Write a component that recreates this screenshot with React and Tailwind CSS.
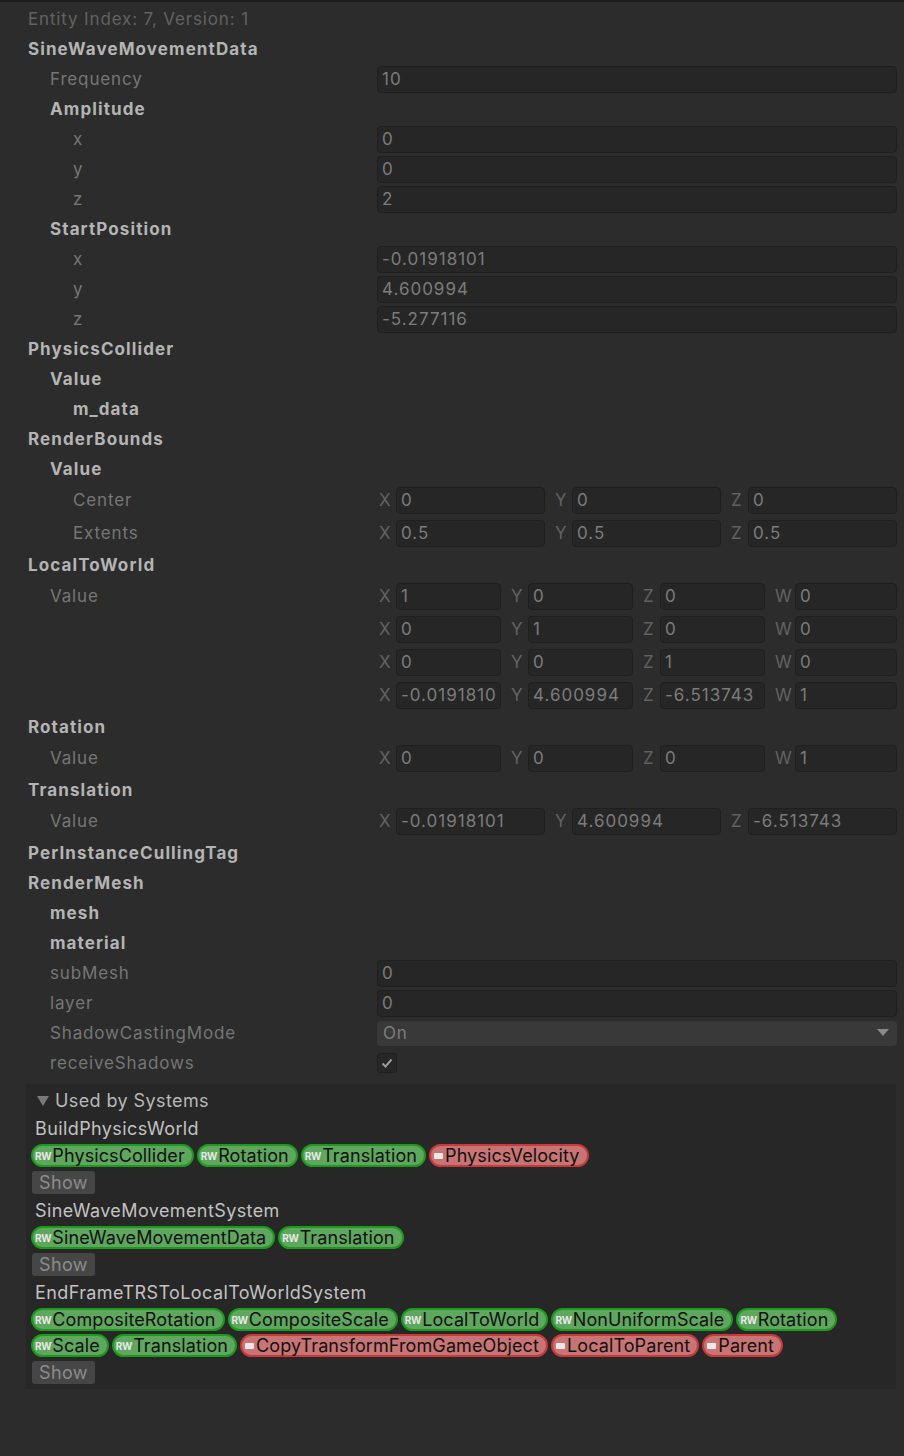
import React from "react";

const font = { fontFamily: "Inter, 'Noto Sans', sans-serif" };

const indent = ["pl-[28px]", "pl-[50px]", "pl-[73px]"];

function Field({ value }) {
  return (
    <div className="h-[27px] flex-1 min-w-0 flex items-center rounded-[4px] bg-[#262626] border border-[#1f1f1f] pl-[4px] text-[#7c7c7c] tracking-[1px] overflow-hidden whitespace-nowrap">
      {value}
    </div>
  );
}

function Row({ label, level = 0, bold = false, tall = false, children }) {
  return (
    <div className={`flex items-center ${tall ? "h-[33px]" : "h-[30px]"}`}>
      <div
        className={`w-[377px] shrink-0 whitespace-nowrap ${indent[level]} ${
          bold ? "font-bold tracking-[1.1px] text-[#b4b4b4]" : "text-[#767676]"
        }`}
      >
        {label}
      </div>
      <div className="flex-1 pr-[7px] flex items-center">{children}</div>
    </div>
  );
}

function Vec({ items }) {
  const cols = items.length === 4 ? "grid-cols-4" : "grid-cols-3";
  return (
    <div className={`grid ${cols} gap-x-[8px] w-full`}>
      {items.map(([axis, v]) => (
        <div key={axis} className="flex items-center min-w-0">
          <span className={`${axis === "W" ? "w-[22px]" : "w-[19px]"} shrink-0 pl-[2px] text-[#626262]`}>{axis}</span>
          <Field value={v} />
        </div>
      ))}
    </div>
  );
}

const RW = () => (
  <span className="text-[10px] leading-none font-bold text-[#e8e8e8] tracking-[-0.3px] mr-[1px] ml-[1px]">RW</span>
);
const Minus = () => <span className="w-[9px] h-[6px] bg-[#e9e9e9] rounded-[1px] mr-[2px] ml-[2px]" />;

function Badge({ name, rw = true }) {
  return (
    <span
      className={`inline-flex items-center h-[23px] rounded-full border-2 pl-[1px] pr-[7px] text-[#111] tracking-[0.1px] ${
        rw ? "bg-[#5fa65f] border-[#1c9a1c]" : "bg-[#c87474] border-[#c63a3a]"
      }`}
    >
      {rw ? <RW /> : <Minus />}
      {name}
    </span>
  );
}

function SystemEntry({ name, badges }) {
  return (
    <div>
      <div className="h-[22px] flex items-center pl-[9px] text-[#c2c2c2]">{name}</div>
      <div className="flex flex-wrap gap-x-[3px] gap-y-[3px] pl-[5px] mt-[4px]">
        {badges.map(([n, rw]) => (
          <Badge key={n} name={n} rw={rw} />
        ))}
      </div>
      <div className="pl-[6px] mt-[4px]">
        <span className="inline-flex items-center h-[23px] px-[7px] rounded-[3px] bg-[#464646] text-[#8c8c8c]">Show</span>
      </div>
    </div>
  );
}

export default function App() {
  return (
    <div
      className="w-[904px] h-[1456px] bg-[#2c2c2c] border-t-2 border-[#1c1c1c] text-[17px] leading-none tracking-[0.85px] overflow-hidden"
      style={font}
    >
      <div className="pt-[2px]">
        <Row label={<span className="text-[#626262]">Entity Index: 7, Version: 1</span>} />
        <Row label="SineWaveMovementData" bold />
        <Row label="Frequency" level={1}>
          <Field value="10" />
        </Row>
        <Row label="Amplitude" level={1} bold />
        <Row label="x" level={2}>
          <Field value="0" />
        </Row>
        <Row label="y" level={2}>
          <Field value="0" />
        </Row>
        <Row label="z" level={2}>
          <Field value="2" />
        </Row>
        <Row label="StartPosition" level={1} bold />
        <Row label="x" level={2}>
          <Field value="-0.01918101" />
        </Row>
        <Row label="y" level={2}>
          <Field value="4.600994" />
        </Row>
        <Row label="z" level={2}>
          <Field value="-5.277116" />
        </Row>
        <Row label="PhysicsCollider" bold />
        <Row label="Value" level={1} bold />
        <Row label="m_data" level={2} bold />
        <Row label="RenderBounds" bold />
        <Row label="Value" level={1} bold />
        <Row label="Center" level={2} tall>
          <Vec items={[["X", "0"], ["Y", "0"], ["Z", "0"]]} />
        </Row>
        <Row label="Extents" level={2} tall>
          <Vec items={[["X", "0.5"], ["Y", "0.5"], ["Z", "0.5"]]} />
        </Row>
        <Row label="LocalToWorld" bold />
        <Row label="Value" level={1} tall>
          <Vec items={[["X", "1"], ["Y", "0"], ["Z", "0"], ["W", "0"]]} />
        </Row>
        <Row label="" tall>
          <Vec items={[["X", "0"], ["Y", "1"], ["Z", "0"], ["W", "0"]]} />
        </Row>
        <Row label="" tall>
          <Vec items={[["X", "0"], ["Y", "0"], ["Z", "1"], ["W", "0"]]} />
        </Row>
        <Row label="" tall>
          <Vec items={[["X", "-0.0191810"], ["Y", "4.600994"], ["Z", "-6.513743"], ["W", "1"]]} />
        </Row>
        <Row label="Rotation" bold />
        <Row label="Value" level={1} tall>
          <Vec items={[["X", "0"], ["Y", "0"], ["Z", "0"], ["W", "1"]]} />
        </Row>
        <Row label="Translation" bold />
        <Row label="Value" level={1} tall>
          <Vec items={[["X", "-0.01918101"], ["Y", "4.600994"], ["Z", "-6.513743"]]} />
        </Row>
        <Row label="PerInstanceCullingTag" bold />
        <Row label="RenderMesh" bold />
        <Row label="mesh" level={1} bold />
        <Row label="material" level={1} bold />
        <Row label="subMesh" level={1}>
          <Field value="0" />
        </Row>
        <Row label="layer" level={1}>
          <Field value="0" />
        </Row>
        <Row label="ShadowCastingMode" level={1}>
          <div className="h-[25px] flex-1 flex items-center justify-between rounded-[4px] bg-[#393939] pl-[6px] pr-[8px] text-[#7c7c7c]">
            <span>On</span>
            <svg width="12" height="8" viewBox="0 0 12 8">
              <path d="M0 0 H12 L6 7 Z" fill="#8a8a8a" />
            </svg>
          </div>
        </Row>
        <Row label="receiveShadows" level={1}>
          <div className="w-[20px] h-[20px] rounded-[3px] bg-[#262626] border border-[#1f1f1f] flex items-center justify-center">
            <svg width="12" height="10" viewBox="0 0 12 10">
              <path d="M1.5 5.5 L4.5 8.5 L10.5 1.5" stroke="#9a9a9a" strokeWidth="2" fill="none" />
            </svg>
          </div>
        </Row>
      </div>

      <div className="ml-[26px] w-[870px] mt-[6px] bg-[#272727] pb-[5px] text-[18px] tracking-[0.4px]">
        <div className="h-[34px] flex items-center pl-[11px] text-[#b8b8b8]">
          <svg width="12" height="10" viewBox="0 0 12 10" className="mr-[6px]">
            <path d="M0 0 H12 L6 10 Z" fill="#7a7a7a" />
          </svg>
          Used by Systems
        </div>
        <div className="flex flex-col gap-[6px]">
          <SystemEntry
            name="BuildPhysicsWorld"
            badges={[
              ["PhysicsCollider", true],
              ["Rotation", true],
              ["Translation", true],
              ["PhysicsVelocity", false],
            ]}
          />
          <SystemEntry
            name="SineWaveMovementSystem"
            badges={[
              ["SineWaveMovementData", true],
              ["Translation", true],
            ]}
          />
          <SystemEntry
            name="EndFrameTRSToLocalToWorldSystem"
            badges={[
              ["CompositeRotation", true],
              ["CompositeScale", true],
              ["LocalToWorld", true],
              ["NonUniformScale", true],
              ["Rotation", true],
              ["Scale", true],
              ["Translation", true],
              ["CopyTransformFromGameObject", false],
              ["LocalToParent", false],
              ["Parent", false],
            ]}
          />
        </div>
      </div>
    </div>
  );
}
